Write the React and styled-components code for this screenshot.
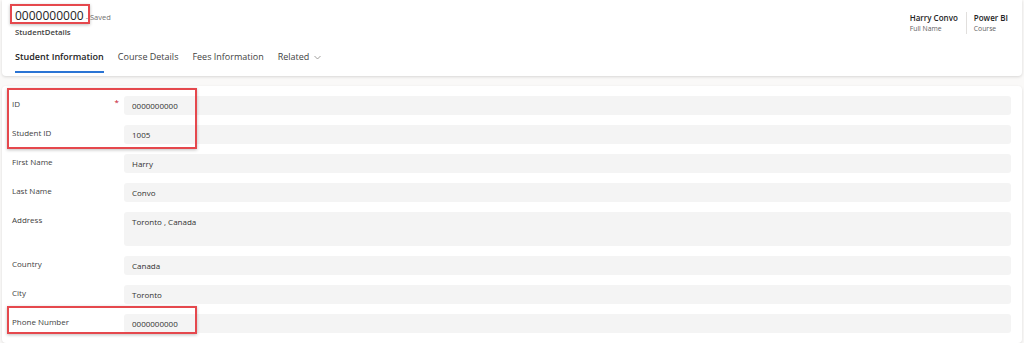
import React from 'react';
import styled, { createGlobalStyle } from 'styled-components';

const GlobalStyle = createGlobalStyle`
  body {
    margin: 0;
    background: #faf9f8;
    font-family: "Open Sans", "Liberation Sans", sans-serif;
    color: #323130;
  }
`;

const Page = styled.div`
  display: flex;
  flex-direction: column;
  gap: 10px;
  padding: 0 2px 0 2px;
  width: 1020px;
`;

const HeaderCard = styled.div`
  background: #fff;
  border-radius: 0 0 4px 4px;
  box-shadow: 0 1px 3px rgba(0, 0, 0, 0.14);
  padding: 8px 14px 3px 13px;
  display: flex;
  flex-direction: column;
`;

const TopRow = styled.div`
  display: flex;
  justify-content: space-between;
  align-items: flex-start;
`;

const TitleRow = styled.div`
  display: flex;
  align-items: baseline;
  gap: 2px;
`;

const Highlight = styled.div`
  position: relative;

  &::after {
    content: '';
    position: absolute;
    top: ${p => p.$top}px;
    bottom: ${p => p.$bottom}px;
    left: ${p => p.$left}px;
    ${p => (p.$width ? `width: ${p.$width}px;` : `right: ${p.$right}px;`)}
    border: 2px solid #e5484d;
    box-shadow: 0 1px 3px rgba(0, 0, 0, 0.25);
    pointer-events: none;
  }
`;

const Title = styled(Highlight)`
  font-size: 12px;
  line-height: 16px;
  font-weight: 500;
  color: #242424;
`;

const Saved = styled.span`
  font-size: 7.5px;
  line-height: 10px;
  color: #707070;
`;

const Entity = styled.div`
  margin-top: 3px;
  font-size: 7.8px;
  line-height: 11px;
  font-weight: 600;
  color: #424242;
`;

const Summary = styled.div`
  display: flex;
  margin-top: 4px;
`;

const SummaryItem = styled.div`
  display: flex;
  flex-direction: column;
  padding: 0 ${p => (p.$last ? 0 : 8)}px 0 ${p => (p.$first ? 0 : 7)}px;
  border-left: ${p => (p.$first ? 'none' : '1px solid #e1dfdd')};
`;

const SummaryValue = styled.span`
  font-size: 8px;
  line-height: 12px;
  font-weight: 600;
  color: #242424;
`;

const SummaryLabel = styled.span`
  font-size: 6.8px;
  line-height: 10px;
  color: #616161;
`;

const Tabs = styled.div`
  display: flex;
  gap: 14px;
`;

const Tab = styled.div`
  display: flex;
  align-items: center;
  gap: 5px;
  font-size: 9px;
  line-height: 12px;
  padding: 13px 0 8px;
  font-weight: ${p => (p.$active ? 600 : 400)};
  color: ${p => (p.$active ? '#242424' : '#424242')};
  border-bottom: 2px solid ${p => (p.$active ? '#2a74d4' : 'transparent')};
`;

const FormCard = styled.div`
  background: #fff;
  border-radius: 4px;
  box-shadow: 0 1px 3px rgba(0, 0, 0, 0.12);
  padding: 10px 11px 10px 10px;
  display: flex;
  flex-direction: column;
  gap: 10px;
`;

const Group = styled(Highlight)`
  display: flex;
  flex-direction: column;
  gap: 10px;
`;

const Row = styled.div`
  display: grid;
  grid-template-columns: 112px 1fr;
  align-items: start;
`;

const Label = styled.div`
  display: flex;
  justify-content: space-between;
  font-size: 8px;
  line-height: 11px;
  padding: 2px 5px 0 0;
  color: #424242;
`;

const Required = styled.span`
  color: #c50f1f;
  font-size: 8px;
  line-height: 8px;
`;

const Field = styled.div`
  background: #f4f4f4;
  border-radius: 3px;
  height: ${p => (p.$tall ? 34 : 19)}px;
  padding: ${p => (p.$tall ? '4px 8px 0' : '0 8px')};
  box-sizing: border-box;
  font-size: 8px;
  line-height: ${p => (p.$tall ? 11 : 19)}px;
  color: #323130;
`;

const Chevron = () => (
  <svg width="7" height="5" viewBox="0 0 7 5" fill="none">
    <path d="M0.5 1L3.5 4L6.5 1" stroke="#8a8886" strokeWidth="0.8" />
  </svg>
);

const FieldRow = ({ label, value, required, tall }) => (
  <Row>
    <Label>
      <span>{label}</span>
      {required && <Required>*</Required>}
    </Label>
    <Field $tall={tall}>{value}</Field>
  </Row>
);

export default function App() {
  return (
    <>
      <GlobalStyle />
      <Page>
        <HeaderCard>
          <TopRow>
            <div>
              <TitleRow>
                <Title $top={-4} $bottom={0} $left={-5} $right={-6}>
                  0000000000
                </Title>
                <Saved>- Saved</Saved>
              </TitleRow>
              <Entity>StudentDetails</Entity>
            </div>
            <Summary>
              <SummaryItem $first>
                <SummaryValue>Harry Convo</SummaryValue>
                <SummaryLabel>Full Name</SummaryLabel>
              </SummaryItem>
              <SummaryItem $last>
                <SummaryValue>Power BI</SummaryValue>
                <SummaryLabel>Course</SummaryLabel>
              </SummaryItem>
            </Summary>
          </TopRow>
          <Tabs>
            <Tab $active>Student Information</Tab>
            <Tab>Course Details</Tab>
            <Tab>Fees Information</Tab>
            <Tab>
              Related <Chevron />
            </Tab>
          </Tabs>
        </HeaderCard>
        <FormCard>
          <Group $top={-8} $bottom={-5} $left={-5} $width={186}>
            <FieldRow label="ID" value="0000000000" required />
            <FieldRow label="Student ID" value="1005" />
          </Group>
          <FieldRow label="First Name" value="Harry" />
          <FieldRow label="Last Name" value="Convo" />
          <FieldRow label="Address" value="Toronto , Canada" tall />
          <FieldRow label="Country" value="Canada" />
          <FieldRow label="City" value="Toronto" />
          <Group $top={-8} $bottom={-1} $left={-5} $width={186}>
            <FieldRow label="Phone Number" value="0000000000" />
          </Group>
        </FormCard>
      </Page>
    </>
  );
}
